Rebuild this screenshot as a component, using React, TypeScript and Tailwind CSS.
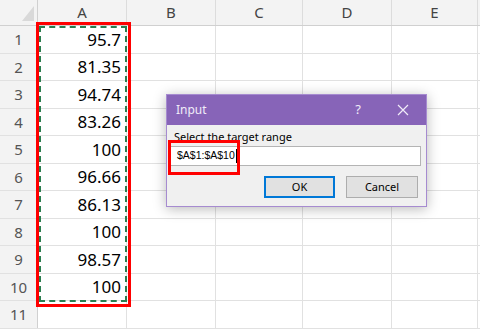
import React from "react";

const values = ["95.7", "81.35", "94.74", "83.26", "100", "96.66", "86.13", "100", "98.57", "100"];
const cols = [
  { name: "A", w: "w-[89px]" },
  { name: "B", w: "w-[89px]" },
  { name: "C", w: "w-[87px]" },
  { name: "D", w: "w-[89px]" },
  { name: "E", w: "w-[86px]" },
];

const font = { fontFamily: '"Noto Sans", "Open Sans", sans-serif' };

function Dialog() {
  return (
    <div
      className="absolute left-[166px] top-[94px] w-[261px] h-[113px] border border-[#a68bd0] bg-[#f0f0f0] shadow-[0_2px_12px_rgba(0,0,0,0.28)] flex flex-col"
      style={font}
    >
      <div className="h-[30px] bg-[#8764b8] flex items-center pl-[9px] pr-[14px] text-[12px] text-[#f1ecf8]">
        <span className="flex-1">Input</span>
        <span className="mr-[36px] text-[13px]">?</span>
        <svg width="12" height="12" viewBox="0 0 12 12" className="mr-[3px]">
          <path d="M1 1L11 11M11 1L1 11" stroke="#f1ecf8" strokeWidth="1.2" />
        </svg>
      </div>
      <div className="flex flex-col px-[3px] pt-[5px]">
        <div className="text-[11px] leading-[14px] text-black pl-[4px]">Select the target range</div>
        <div className="mt-[2px] h-[20px] w-[251px] bg-white border border-[#b4b4b4] flex items-center pl-[6px] text-[10.5px] text-black font-['Liberation_Sans',sans-serif]">
          <span>$A$1:$A$10</span>
          <span className="w-px h-[14px] bg-black ml-px" />
        </div>
        <div className="mt-[10px] flex justify-end gap-[11px] pr-[5px]">
          <div className="w-[71px] h-[22px] border-2 border-[#0078d7] bg-[#e1e1e1] flex items-center justify-center text-[11px] text-black">
            OK
          </div>
          <div className="w-[72px] h-[22px] border border-[#adadad] bg-[#e1e1e1] flex items-center justify-center text-[11px] text-black">
            Cancel
          </div>
        </div>
      </div>
    </div>
  );
}

export default function App() {
  return (
    <div className="relative w-[480px] h-[329px] overflow-hidden bg-white" style={font}>
      {/* header row */}
      <div className="flex h-[26px] bg-[#f3f3f3] border-b border-[#d0d0d0]">
        <div className="w-[38px] shrink-0 border-r border-[#d0d0d0] relative">
          <svg width="12" height="15" viewBox="0 0 12 15" className="absolute right-[3px] bottom-[4px]">
            <path d="M12 0V15H0Z" fill="#d9d9d9" />
          </svg>
        </div>
        {cols.map((c) => (
          <div
            key={c.name}
            className={`${c.w} shrink-0 border-r border-[#dcdcdc] flex items-center justify-center text-[15px] text-[#444]`}
          >
            {c.name}
          </div>
        ))}
        <div className="flex-1" />
      </div>
      {Array.from({ length: 11 }).map((_, i) => (
        <div key={i} className="flex h-[27.5px] border-b border-[#e1e1e1]">
          <div className="w-[38px] shrink-0 bg-[#f3f3f3] border-r border-[#d0d0d0] flex items-center justify-center text-[15px] text-[#555]">
            {i + 1}
          </div>
          {cols.map((c, j) => (
            <div
              key={c.name}
              className={`${c.w} shrink-0 border-r border-[#e1e1e1] flex items-center justify-end pr-[5px] text-[17px] text-black`}
            >
              {j === 0 ? values[i] ?? "" : ""}
            </div>
          ))}
          <div className="flex-1" />
        </div>
      ))}

      {/* copy marquee */}
      <div className="absolute left-[39px] top-[26px] w-[88px] h-[276px] border-2 border-dashed border-[#2a7d4f] pointer-events-none" />
      {/* red highlight */}
      <div className="absolute left-[36px] top-[22px] w-[95px] h-[285px] border-[3px] border-[#ff0000] pointer-events-none" />

      <Dialog />
      <div className="absolute left-[168px] top-[140px] w-[72px] h-[35px] border-[3px] border-[#ff0000]" />
    </div>
  );
}
